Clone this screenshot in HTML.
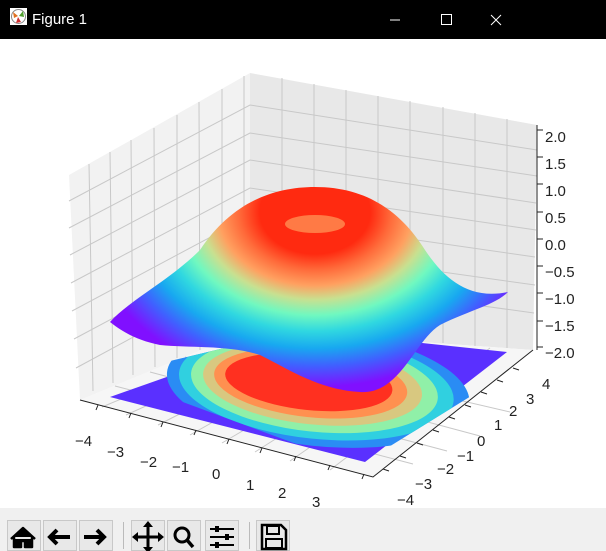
<!DOCTYPE html>
<html><head><meta charset="utf-8"><style>
html,body{margin:0;padding:0;width:606px;height:551px;overflow:hidden;background:#fff;font-family:"Liberation Sans","DejaVu Sans",sans-serif}
#tb{position:absolute;left:0;top:0;width:606px;height:39px;background:#000;color:#fff}
#tool{position:absolute;left:0;top:508px;width:606px;height:43px;background:#f0f0f0}
.b{position:absolute;top:12px;width:34px;height:31px;background:#e8e8e8;border:1px solid #c8c8c8;box-sizing:border-box}
</style></head><body>
<div id="tb">
<svg width="606" height="39" style="position:absolute;left:0;top:0">
<rect x="10" y="8" width="17" height="17" fill="#fff"/>
<circle cx="18.5" cy="16.5" r="7" fill="none" stroke="#888" stroke-width="1"/>
<path d="M18 16 L13 12 L14 18 Z" fill="#e07020"/><path d="M19 16 L23 11 L24 17Z" fill="#50a030"/><path d="M18 17 L16 23 L21 22Z" fill="#d03030"/>
<text x="32" y="24" font-size="15" fill="#fff" font-family="Liberation Sans, sans-serif">Figure 1</text>
<line x1="390" y1="20" x2="400" y2="20" stroke="#fff" stroke-width="1"/>
<rect x="441.5" y="14.5" width="10" height="10" fill="none" stroke="#fff"/>
<path d="M491 15 L501 25 M501 15 L491 25" stroke="#fff" stroke-width="1"/>
</svg></div>

<svg width="606" height="469" style="position:absolute;left:0;top:39px" viewBox="0 39 606 469">
<defs>
<radialGradient id="g" gradientUnits="userSpaceOnUse" cx="315" cy="212" r="1" gradientTransform="translate(315 212) scale(230 175) translate(-315 -212)">
<stop offset="0" stop-color="#ff2a10"/><stop offset=".24" stop-color="#ff2a10"/>
<stop offset=".33" stop-color="#ff6a3a"/><stop offset=".42" stop-color="#ffa060"/>
<stop offset=".5" stop-color="#c8e090"/><stop offset=".59" stop-color="#70f8c0"/>
<stop offset=".68" stop-color="#30d8e0"/><stop offset=".78" stop-color="#18a8f0"/>
<stop offset=".88" stop-color="#4060ff"/><stop offset="1" stop-color="#8010ff"/>
</radialGradient>
<clipPath id="pl"><polygon points="110,397 300,330 507,352 365,462"/></clipPath>
</defs>
<polygon points="69,175 250,73 250,330 80,400" fill="#f2f2f2"/>
<polygon points="250,73 537,125 533,350 250,330" fill="#e8e8e8"/>
<polygon points="80,400 250,330 533,350 373,477" fill="#f6f6f6"/>
<g stroke="#c8c8c8" stroke-width="1" fill="none">
<path d="M89,164 L93,391 M110,152 L113,383 M131,140 L133,375 M154,128 L155,367 M177,115 L177,358 M199,102 L200,350 M222,89 L222,341 M244,76 L244,332"/>
<path d="M69,201 L250,105 L537,150 M69,228 L250,133 L537,176 M70,255 L250,160 L536,203 M71,283 L250,188 L536,230 M72,311 L250,216 L535,257 M74,339 L250,245 L535,285 M76,368 L250,274 L534,313"/>
<path d="M282,78 L282,332 M314,84 L314,334 M346,90 L346,337 M378,96 L378,339 M410,101 L410,341 M443,107 L443,343 M475,113 L475,346 M507,119 L507,348"/>
<path d="M115,386 L413,464 M150,372 L447,451 M185,357 L480,436 M218,344 L510,412 M102,407 L272,336 M126,415 L296,338 M158,425 L325,340 M190,435 L355,342 M222,443 L390,344 M255,452 L422,346 M290,461 L455,347 M330,470 L490,348"/>
</g>
<polygon points="110,397 300,330 507,352 365,462" fill="#5a30ff"/>
<g clip-path="url(#pl)" transform="rotate(6 318 390)">
<ellipse cx="318" cy="388" rx="152" ry="58" fill="#2a8cf4"/>
<ellipse cx="316" cy="387" rx="138" ry="52" fill="#30d0e0"/>
<ellipse cx="314" cy="386" rx="124" ry="46" fill="#90f0a8"/>
<ellipse cx="312" cy="385" rx="110" ry="40" fill="#d8c880"/>
<ellipse cx="310" cy="384" rx="97" ry="34" fill="#ff9050"/>
<ellipse cx="308" cy="383" rx="84" ry="28" fill="#ff3020"/>
</g>
<path d="M110,322 C130,300 170,280 200,250 C230,205 270,187 315,187 C365,187 400,210 425,250 C445,280 470,300 508,292 C495,305 470,310 440,325 C415,340 400,395 360,392 C320,390 290,370 260,355 C230,345 190,348 160,345 C135,340 120,330 110,322 Z" fill="url(#g)"/>
<ellipse cx="315" cy="224" rx="30" ry="9" fill="#ff7a45"/>
<g stroke="#222" stroke-width="1" fill="none">
<path d="M537,125 L537,350 M80,400 L373,477 L533,350"/>
<path d="M537,130 L543,130 M537,157 L543,157 M537,184 L543,184 M537,212 L543,212 M537,239 L543,239 M537,266 L543,266 M537,293 L543,293 M537,321 L543,321 M537,347 L543,347"/>
<path d="M98,405 L96,410 M131,413 L129,418 M163,422 L161,427 M196,430 L194,435 M229,439 L227,444 M262,448 L260,453 M296,456 L294,461 M330,465 L328,470 M364,474 L362,479"/>
<path d="M383,469 L389,471 M400,456 L406,458 M417,443 L423,445 M433,430 L439,432 M449,417 L455,419 M465,405 L471,407 M481,392 L487,394 M497,380 L503,382 M513,368 L519,370"/>
</g>
<g font-size="15" fill="#222" font-family="Liberation Sans, DejaVu Sans, sans-serif">
<text x="545" y="142">2.0</text><text x="545" y="169">1.5</text><text x="545" y="196">1.0</text><text x="545" y="223">0.5</text><text x="545" y="250">0.0</text><text x="545" y="277">−0.5</text><text x="545" y="304">−1.0</text><text x="545" y="331">−1.5</text><text x="545" y="358">−2.0</text>
<text x="75" y="446">−4</text><text x="107" y="457">−3</text><text x="140" y="467">−2</text><text x="172" y="472">−1</text><text x="212" y="479">0</text><text x="246" y="490">1</text><text x="278" y="498">2</text><text x="312" y="507">3</text>
<text x="397" y="505">−4</text><text x="415" y="489">−3</text><text x="437" y="474">−2</text><text x="457" y="461">−1</text><text x="477" y="446">0</text><text x="494" y="430">1</text><text x="509" y="416">2</text><text x="526" y="404">3</text><text x="542" y="389">4</text>
</g>
</svg>

<div id="tool">
<div class="b" style="left:7px"></div><div class="b" style="left:43px"></div><div class="b" style="left:79px"></div>
<div style="position:absolute;left:123px;top:14px;width:1px;height:27px;background:#bbb"></div>
<div class="b" style="left:131px"></div><div class="b" style="left:167px"></div><div class="b" style="left:205px"></div>
<div style="position:absolute;left:249px;top:14px;width:1px;height:27px;background:#bbb"></div>
<div class="b" style="left:256px"></div>
<svg width="300" height="43" style="position:absolute;left:0;top:0">
<path d="M11,31 L23,20 L35,31 M14,29 V39 H21 V33 H25 V39 H32 V29" fill="#000" stroke="#000" stroke-width="2.5" stroke-linejoin="round"/>
<path d="M70,29 H50 M57,22 L50,29 L57,36" stroke="#000" stroke-width="4" fill="none"/>
<path d="M84,29 H104 M97,22 L104,29 L97,36" stroke="#000" stroke-width="4" fill="none"/>
<path d="M136,29 H160 M148,17 V41" stroke="#000" stroke-width="3"/>
<path d="M132,29 L138,24 V34Z M164,29 L158,24 V34Z M148,13 L143,19 H153Z M148,45 L143,39 H153Z" fill="#000"/>
<circle cx="182" cy="27" r="7" stroke="#000" stroke-width="3" fill="none"/><path d="M187,32 L193,39" stroke="#000" stroke-width="3.5"/>
<path d="M210,21 H234 M210,29 H234 M210,37 H234" stroke="#000" stroke-width="2"/>
<rect x="215" y="18" width="4" height="6" fill="#000"/><rect x="225" y="26" width="4" height="6" fill="#000"/><rect x="215" y="34" width="4" height="6" fill="#000"/>
<path d="M262,17 H281 L286,22 V41 H262 Z" fill="none" stroke="#000" stroke-width="2.5"/>
<rect x="267" y="18" width="12" height="8" fill="none" stroke="#000" stroke-width="2"/>
<rect x="266" y="31" width="16" height="9" fill="none" stroke="#000" stroke-width="2"/>
</svg>
</div>
</body></html>
